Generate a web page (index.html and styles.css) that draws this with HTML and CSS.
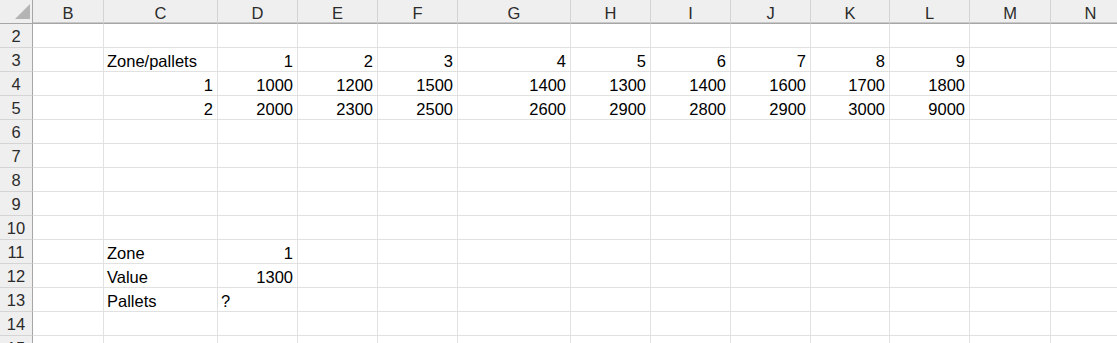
FILE: index.html
```html
<!DOCTYPE html>
<html lang="en">
<head>
    <meta charset="UTF-8">
    <meta name="viewport" content="width=device-width, initial-scale=1.0">
    <title>Zone / pallets</title>
    <link rel="stylesheet" href="styles.css">
</head>
<body>
    <div class="sheet" id="sheet"></div>

    <script>
        const sheet = document.getElementById('sheet');
        const cols = ['B', 'C', 'D', 'E', 'F', 'G', 'H', 'I', 'J', 'K', 'L', 'M', 'N'];

        // only the filled cells, by row then column
        const data = {
            3: { C: 'Zone/pallets', D: 1, E: 2, F: 3, G: 4, H: 5, I: 6, J: 7, K: 8, L: 9 },
            4: { C: 1, D: 1000, E: 1200, F: 1500, G: 1400, H: 1300, I: 1400, J: 1600, K: 1700, L: 1800 },
            5: { C: 2, D: 2000, E: 2300, F: 2500, G: 2600, H: 2900, I: 2800, J: 2900, K: 3000, L: 9000 },
            11: { C: 'Zone', D: 1 },
            12: { C: 'Value', D: 1300 },
            13: { C: 'Pallets', D: '?' }
        };

        // top-left corner with the select-all triangle
        const corner = document.createElement('div');
        corner.className = 'corner';
        corner.innerHTML = '<svg width="33" height="23" viewBox="0 0 33 23"><polygon points="15,19 30,19 30,4" fill="#b4b4b4"/></svg>';
        sheet.appendChild(corner);

        cols.forEach(c => {
            const head = document.createElement('div');
            head.className = 'col-head';
            head.textContent = c;
            sheet.appendChild(head);
        });

        for (let r = 2; r <= 15; r++) {
            const head = document.createElement('div');
            head.className = 'row-head';
            head.textContent = r;
            sheet.appendChild(head);

            cols.forEach(c => {
                const cell = document.createElement('div');
                cell.className = 'cell';
                const value = data[r] && data[r][c];
                if (value !== undefined) {
                    cell.textContent = value;
                    if (typeof value === 'number') cell.classList.add('num');
                }
                sheet.appendChild(cell);
            });
        }
    </script>
</body>
</html>
```

FILE: styles.css
```css
body {
    margin: 0;
    background-color: #fff;
    font-family: "Liberation Sans", Arial, sans-serif;
    font-size: 16.5px;
    color: #000;
    overflow: hidden;
}
.sheet {
    display: grid;
    grid-template-columns: 33px 71px 114px 80px 80px 80px 113px 80px 80px 80px 79px 80px 81px 80px;
    grid-auto-rows: 24px;
}
.sheet > div {
    box-sizing: border-box;
    white-space: nowrap;
    overflow: hidden;
    line-height: 20px;
}
.corner {
    background-color: #efefef;
    border-right: 1px solid #a6a6a6;
    border-bottom: 1px solid #a6a6a6;
}
.corner svg {
    display: block;
}
.col-head {
    background-color: #efefef;
    border-right: 1px solid #d4d4d4;
    border-bottom: 1px solid #a6a6a6;
    box-shadow: inset 0 -1px 0 #c8c8c8;
    text-align: center;
    color: #2b2b2b;
    padding-top: 3px;
}
.row-head {
    background-color: #efefef;
    border-right: 1px solid #a6a6a6;
    border-bottom: 1px solid #d4d4d4;
    text-align: center;
    color: #2b2b2b;
    padding-top: 2px;
}
.cell {
    border-right: 1px solid #e1e1e1;
    border-bottom: 1px solid #e1e1e1;
    padding: 3px 4px 0 3px;
}
.cell.num {
    text-align: right;
}
```
